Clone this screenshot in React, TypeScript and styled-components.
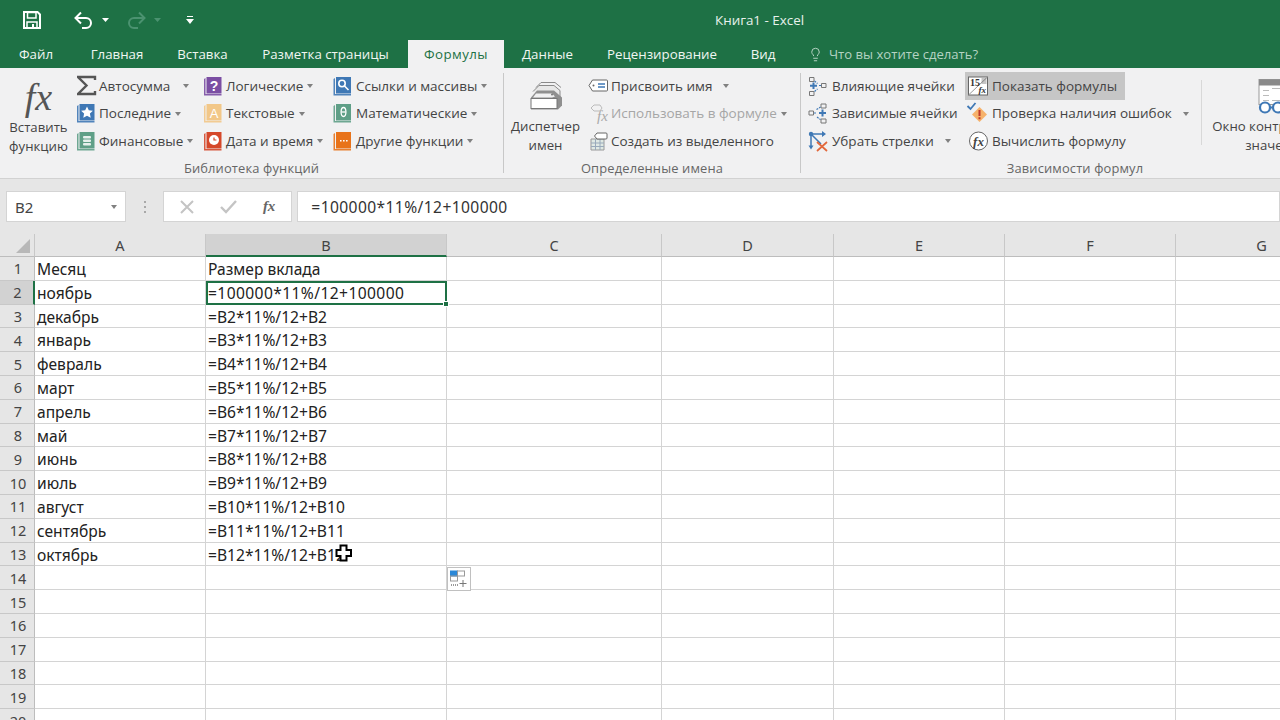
import React from "react";
import styled, { createGlobalStyle } from "styled-components";
import { Lightbulb } from "lucide-react";

const Global = createGlobalStyle`
  html, body { margin: 0; padding: 0; background: #fff; }
  #root { width: 1280px; height: 720px; overflow: hidden; }
  * { box-sizing: border-box; }
`;
const GREEN = "#1e7145";
const UI = `"Open Sans", "Noto Sans", sans-serif`;

const Page = styled.div`
  width: 1280px; height: 720px; overflow: hidden; position: relative;
  font-family: ${UI}; color: #444; display: flex; flex-direction: column;
`;
const TitleBar = styled.header`
  height: 40px; flex: none; background: ${GREEN}; display: flex; align-items: center; color: #fff; padding-left: 21px;
`;
const QatIcon = styled.svg<{ $ml: number }>`margin-left: ${(p) => p.$ml}px; flex: none; display: block;`;
const Title = styled.div`
  position: absolute; left: 715px; top: 12px; font-size: 13.4px; line-height: 17px; color: #e8f1ec; white-space: nowrap;
`;
const Tabs = styled.nav`
  height: 28px; flex: none; background: ${GREEN}; display: flex; align-items: stretch; padding-left: 18px; font-size: 13.3px;
`;
const Tab = styled.div<{ $w: number; $active?: boolean }>`
  width: ${(p) => p.$w}px; flex: none; display: flex; align-items: center; justify-content: center; white-space: nowrap;
  color: ${(p) => (p.$active ? GREEN : "#f0f6f2")}; background: ${(p) => (p.$active ? "#f1f1f2" : "transparent")};
  letter-spacing: ${(p) => (p.$active ? "0.4px" : "0")};
`;
const Tell = styled.div`
  display: flex; align-items: center; gap: 6px; color: #b5d3c3; margin-left: 33px; white-space: nowrap; font-size: 13.1px;
`;
const Ribbon = styled.section`
  height: 111px; flex: none; background: #f1f1f2; border-bottom: 1px solid #d2d2d2; display: flex; padding-top: 4px; font-size: 13.5px;
`;
const Group = styled.div<{ $w: number }>`
  width: ${(p) => p.$w}px; flex: none; display: flex; flex-direction: column;
`;
const GroupBody = styled.div`display: flex; height: 83px;`;
const GroupLabel = styled.div`
  text-align: center; font-size: 12.9px; line-height: 17px; color: #666; margin-top: 5px; letter-spacing: 0.15px; white-space: nowrap;
`;
const Sep = styled.div`width: 1px; flex: none; background: #c8c8c8; margin: 1px 0 5px;`;
const InnerSep = styled.div`width: 1px; flex: none; background: #d8d8d8; margin: 8px 5px 10px 0;`;
const BigButton = styled.div<{ $w: number; $iconH: number }>`
  width: ${(p) => p.$w}px; flex: none; display: flex; flex-direction: column; align-items: center; text-align: center;
  line-height: 19px; white-space: nowrap; padding-top: 4px; font-size: 13.2px;
  & > :first-child { height: ${(p) => p.$iconH}px; }
`;
const FxBig = styled.div`
  font-family: "Liberation Serif", serif; font-style: italic; font-size: 38px; line-height: 42px; color: #555;
`;
const Column = styled.div<{ $w: number }>`width: ${(p) => p.$w}px; flex: none; display: flex; flex-direction: column;`;
const Row = styled.div<{ $dim?: boolean; $on?: boolean; $icon: number }>`
  height: 27.5px; display: flex; align-items: center; white-space: nowrap; width: fit-content; padding-right: 8px;
  color: ${(p) => (p.$dim ? "#a6a6a6" : "#444")}; background: ${(p) => (p.$on ? "#c6c6c6" : "transparent")};
  & > svg:first-child { width: ${(p) => p.$icon}px; height: 22px; flex: none; }
`;
const Caret = styled.span<{ $gap: number }>`
  width: 0; height: 0; margin-left: ${(p) => p.$gap}px; margin-top: 1px; flex: none;
  border-left: 3.5px solid transparent; border-right: 3.5px solid transparent; border-top: 4px solid #808080;
`;
const FormulaRow = styled.div`
  height: 55px; flex: none; background: #e6e6e6; padding: 12px 0 0 6px; display: flex; gap: 0;
`;
const Box = styled.div`
  height: 31px; background: #fff; border: 1px solid #d4d4d4; display: flex; align-items: center;
`;
const NameBox = styled(Box)`
  width: 121px; padding: 0 8px; justify-content: space-between; font-family: "Noto Sans", sans-serif; font-size: 15px; color: #444;
`;
const Dots = styled.div`
  width: 37px; flex: none; display: flex; flex-direction: column; align-items: center; justify-content: center; gap: 3px; height: 31px;
  & > i { width: 2px; height: 2px; background: #a8a8a8; display: block; }
`;
const FnButtons = styled(Box)`width: 130px; justify-content: space-around; padding: 0 3px; margin-right: 5px;`;
const FxSmall = styled.span`font-family: "Liberation Serif", serif; font-style: italic; font-weight: 700; font-size: 15px; color: #666;`;
const Input = styled(Box)`
  width: 990px; padding-left: 13px; font-family: "Noto Sans", sans-serif; font-size: 15.6px; letter-spacing: 0.4px; color: #333;
`;
const Sheet = styled.main`
  display: grid; grid-template-columns: 35px 171px 241px 215px 172px 171px 171px 172px;
  grid-template-rows: 23px; grid-auto-rows: 23.8px;
  font-family: "Noto Sans", "Open Sans", sans-serif; font-size: 15.6px; color: #222; background: #fff; flex: none;
`;
const Corner = styled.div`
  background: #e6e6e6; border-right: 1px solid #c8c8c8; border-bottom: 1px solid #bdbdbd; position: relative;
  &::after { content: ""; position: absolute; right: 4px; bottom: 3px; border-style: solid; border-width: 0 0 14px 14px; border-color: transparent transparent #b8b8b8 transparent; }
`;
const ColHead = styled.div<{ $sel?: boolean }>`
  display: flex; align-items: center; justify-content: center; font-family: "Noto Sans", sans-serif; font-size: 14.5px; color: #444;
  background: ${(p) => (p.$sel ? "#d2d2d2" : "#e6e6e6")}; border-right: 1px solid #c8c8c8;
  border-bottom: ${(p) => (p.$sel ? `2px solid ${GREEN}` : "1px solid #bdbdbd")};
`;
const RowHead = styled.div<{ $sel?: boolean }>`
  display: flex; align-items: center; justify-content: center; padding-left: 2px; font-size: 14.5px; color: #444;
  background: ${(p) => (p.$sel ? "#d2d2d2" : "#e6e6e6")}; border-bottom: 1px solid #c8c8c8;
  border-right: ${(p) => (p.$sel ? `2px solid ${GREEN}` : "1px solid #bdbdbd")};
`;
const Cell = styled.div<{ $sel?: boolean }>`
  border-right: 1px solid #d4d4d4; border-bottom: 1px solid #d4d4d4; padding-left: 2px; line-height: 25px;
  white-space: nowrap; position: relative; overflow: visible;
  ${(p) => p.$sel && `outline: 2px solid ${GREEN}; outline-offset: -2px; z-index: 2; letter-spacing: 0.4px;`}
`;
const Handle = styled.i`
  position: absolute; right: -3px; bottom: -3px; width: 6px; height: 6px; background: ${GREEN}; border: 1px solid #fff; display: block;
`;
const PasteBadge = styled.div`
  position: absolute; left: 447px; top: 567px; width: 24px; height: 24px; background: #fff; border: 1px solid #c0c0c0;
  display: flex; align-items: center; justify-content: center; z-index: 3;
`;
const CursorWrap = styled.svg`position: absolute; left: 335px; top: 544px; z-index: 3;`;
const WatchIcon = styled.svg`margin-left: 10px;`;

type G = "star" | "stack" | "q" | "a" | "clock" | "mag" | "theta" | "dots";
const Book = ({ color, g }: { color: string; g: G }) => (
  <svg viewBox="2.5 0 22 22">
    <path d="M2.5 4 V20.5 H20 V19 H4 V3 Z" fill={color} opacity=".9" />
    <rect x="5" y="2" width="15" height="16.5" fill={color} />
    {g === "star" && <path d="M12.5 4.5l1.8 3.8 4.1.5-3 2.8.8 4.1-3.7-2-3.7 2 .8-4.1-3-2.8 4.1-.5z" fill="#fff" />}
    {g === "stack" && <g fill="#fff" opacity=".85"><rect x="8.5" y="6" width="8" height="2.4" rx="1" /><rect x="8.5" y="9.5" width="8" height="2.4" rx="1" /><rect x="8.5" y="13" width="8" height="2.4" rx="1" /></g>}
    {g === "q" && <text x="12.5" y="15.5" textAnchor="middle" fontSize="14" fontWeight="700" fontFamily="Liberation Sans, sans-serif" fill="#fff">?</text>}
    {g === "a" && <text x="12.5" y="15.5" textAnchor="middle" fontSize="13" fontFamily="Liberation Sans, sans-serif" fill="#fff">A</text>}
    {g === "clock" && <g><circle cx="12.5" cy="10" r="5" fill="#fff" /><path d="M12.5 7.5V10h2.4" stroke={color} strokeWidth="1.2" fill="none" /></g>}
    {g === "mag" && <g fill="none" stroke="#fff" strokeWidth="1.6"><circle cx="11" cy="8.5" r="3.2" /><path d="M13.5 11l4 4" /></g>}
    {g === "theta" && <g fill="none" stroke="#fff" strokeWidth="1.3"><ellipse cx="12.5" cy="10" rx="2.4" ry="4.5" /><path d="M10.5 10h4" /></g>}
    {g === "dots" && <path d="M9 10h1.6v1.6H9zM12 10h1.6v1.6H12zM15 10h1.6v1.6H15z" fill="#fff" />}
  </svg>
);
const Sigma = () => (
  <svg viewBox="2 0 22 22"><path d="M20 6V3H3l8.500 8.500L3 20h17v-3" transform="translate(0 -1)" fill="none" stroke="#555" strokeWidth="2.4" /></svg>
);
const Trace = ({ kind }: { kind: "prec" | "dep" | "rem" }) => (
  <svg viewBox="0 0 25 22" fill="none" preserveAspectRatio="xMaxYMid">
    {kind === "prec" && <g>
      <path d="M2.500 2.500h4.500V6.500H2.500zM14.500 8.500h4.500v4h-4.500zM2.500 16.500h4.500v4H2.500z" stroke="#777" />
      <path d="M7.500 6l3 2.500M14 10.500h-2.500M7.500 16.500l3-2.500" stroke="#3f78b5" strokeWidth="1.200" strokeDasharray="2 1" />
      <path d="M6.500 7.500v6.500M3 10.700h7" stroke="#3f78b5" strokeWidth="2" />
    </g>}
    {kind === "dep" && <g>
      <path d="M2 9h4.500v4H2zM14 2h5v4h-5zM14 17h5v4h-5z" stroke="#777" />
      <path d="M7 11h2.500M9.500 7.500l4-2.500M10 15l3.500 2.500" stroke="#3f78b5" strokeWidth="1.200" strokeDasharray="2 1" />
      <path d="M15.500 7.500v7M12 11h7" stroke="#3f78b5" strokeWidth="2" />
    </g>}
    {kind === "rem" && <g>
      <path d="M4 4v13M4 4l13 0M4 4l10 10" stroke="#3f78b5" strokeWidth="1.500" />
      <path d="M1.500 15.500l2.500 4 2.500-4zM15 1l4 3-4 3z" fill="#3f78b5" />
      <circle cx="4" cy="4" r="2.200" fill="#3f78b5" />
      <path d="M10 12l10 9M20 12l-10 9" stroke="#e2683c" strokeWidth="1.700" />
    </g>}
  </svg>
);
const NameTag = () => (
  <svg viewBox="0 0 22 22" fill="none"><path d="M4.5 5h14a1 1 0 0 1 1 1v9a1 1 0 0 1-1 1h-14L1 10.5z" fill="#fff" stroke="#666" /><path d="M10 9h7M10 12h7" stroke="#3f78b5" strokeWidth="1.4" /><circle cx="5.5" cy="10.5" r="1" fill="#666" /></svg>
);
const FxTag = () => (
  <svg viewBox="0 0 22 22" fill="none"><path d="M3 6l3-3h6l2 3-2 3H6z" stroke="#bbb" /><text x="9" y="19" fontSize="15" fontStyle="italic" fontFamily="Liberation Serif, serif" fill="#aaa">fx</text></svg>
);
const FromSel = () => (
  <svg viewBox="0 0 22 22" fill="none"><path d="M3 9h13v11H3z" fill="#dfe9e4" stroke="#999" /><path d="M3 13h13M3 16.500h13M7.500 9v11M12 9v11" stroke="#9ab" /><path d="M9 3h9a1 1 0 0 1 1 1v4a1 1 0 0 1-1 1H9L6.500 6z" fill="#fff" stroke="#666" /></svg>
);
const ShowF = () => (
  <svg viewBox="0 0 22 22"><rect x="1" y="2" width="19" height="18" fill="#fff" stroke="#666" /><path d="M1 20L20 2" stroke="#999" /><text x="2.500" y="11" fontSize="10" fontWeight="700" fontFamily="Liberation Serif, serif" fill="#333">15</text><text x="11" y="18" fontSize="9" fontStyle="italic" fontWeight="700" fontFamily="Liberation Serif, serif" fill="#333">fx</text><path d="M14 3h5v6h-5z" fill="#555" opacity=".35" /></svg>
);
const ErrCheck = () => (
  <svg viewBox="0 0 24 22" fill="none"><path d="M1 4l3 3 5-6" stroke="#3f78b5" strokeWidth="1.800" /><path d="M13 5l7.500 7.500L13 20l-7.500-7.500z" fill="#f6b26b" /><rect x="12" y="8" width="2" height="6" fill="#c0392b" /><rect x="12" y="15.200" width="2" height="2" fill="#c0392b" /></svg>
);
const EvalF = () => (
  <svg viewBox="0 0 22 22" fill="none"><circle cx="11" cy="11" r="9" fill="#fff" stroke="#666" /><text x="11" y="15.500" textAnchor="middle" fontSize="13" fontStyle="italic" fontWeight="700" fontFamily="Liberation Serif, serif" fill="#444">fx</text></svg>
);
const NameManager = () => (
  <svg width="36" height="32" viewBox="0 0 36 32" fill="none">
    <path d="M8 7l5-5h14l6 5" stroke="#8a8a8a" />
    <path d="M5 11l6-6h15l6 5v10" fill="#e8e8e8" stroke="#8a8a8a" />
    <path d="M3 17l6-7h17l8 7v8l-4 4H3z" fill="#8f8f8f" />
    <path d="M8 13h16l3 3-3 1H5z" fill="#f1f1f2" />
    <circle cx="24" cy="14" r="1" fill="#777" />
    <rect x="3" y="18" width="26" height="10" fill="#fff" stroke="#777" />
  </svg>
);
const Watch = () => (
  <WatchIcon width="46" height="36" viewBox="0 0 46 36" fill="none">
    <rect x="1" y="1" width="44" height="25" fill="#fff" stroke="#999" />
    <rect x="1" y="1" width="44" height="6" fill="#8a8a8a" />
    <path d="M5 12h6M5 17h6M5 22h6M14 10h30M14 22h30" stroke="#bbb" />
    <circle cx="7" cy="29" r="5" fill="#fff" stroke="#3f78b5" strokeWidth="2.200" />
    <circle cx="20" cy="29" r="5" fill="#fff" stroke="#3f78b5" strokeWidth="2.200" />
    <path d="M12 29h3" stroke="#3f78b5" strokeWidth="2" />
  </WatchIcon>
);

type Item = { icon: React.ReactNode; w: number; text: string; gap?: number; dim?: boolean; on?: boolean };
const Col = ({ w, items }: { w: number; items: Item[] }) => (
  <Column $w={w}>
    {items.map((i) => (
      <Row key={i.text} $icon={i.w} $dim={i.dim} $on={i.on}>
        {i.icon}
        <span>{i.text}</span>
        {i.gap !== undefined && <Caret $gap={i.gap} />}
      </Row>
    ))}
  </Column>
);

const rows: [string, string][] = [
  ["Месяц", "Размер вклада"], ["ноябрь", "=100000*11%/12+100000"], ["декабрь", "=B2*11%/12+B2"],
  ["январь", "=B3*11%/12+B3"], ["февраль", "=B4*11%/12+B4"], ["март", "=B5*11%/12+B5"],
  ["апрель", "=B6*11%/12+B6"], ["май", "=B7*11%/12+B7"], ["июнь", "=B8*11%/12+B8"],
  ["июль", "=B9*11%/12+B9"], ["август", "=B10*11%/12+B10"], ["сентябрь", "=B11*11%/12+B11"],
  ["октябрь", "=B12*11%/12+B12"],
];

export default function App() {
  const allRows = Array.from({ length: 20 }, (_, i) => i);
  return (
    <Page>
      <Global />
      <TitleBar>
        <QatIcon $ml={2} width="18" height="18" viewBox="0 0 18 18" fill="none">
          <path d="M1 1h13.500L17 3.500V17H1z" stroke="#fff" strokeWidth="2" />
          <path d="M4.500 1.500h8.500V7H4.500z" stroke="#fff" strokeWidth="1.500" />
          <path d="M4 17v-6h10v6" stroke="#fff" strokeWidth="1.500" />
          <path d="M9 13h2v4H9z" fill="#fff" />
        </QatIcon>
        <QatIcon $ml={33} width="20" height="18" viewBox="0 0 20 18" fill="none">
          <path d="M2 7h10a5 5 0 0 1 0 10H8" stroke="#fff" strokeWidth="2" />
          <path d="M7 1.500L1.500 7 7 12.500" stroke="#fff" strokeWidth="2" />
        </QatIcon>
        <QatIcon $ml={8} width="7" height="5" viewBox="0 0 7 5"><path d="M0 0h7L3.500 4z" fill="#fff" /></QatIcon>
        <QatIcon $ml={17} width="20" height="18" viewBox="0 0 20 18" fill="none">
          <path d="M18 7H8a5 5 0 0 0 0 10h4" stroke="#4b9270" strokeWidth="2" />
          <path d="M13 1.500L18.500 7 13 12.500" stroke="#4b9270" strokeWidth="2" />
        </QatIcon>
        <QatIcon $ml={8} width="7" height="5" viewBox="0 0 7 5"><path d="M0 0h7L3.500 4z" fill="#4b9270" /></QatIcon>
        <QatIcon $ml={25} width="8" height="8" viewBox="0 0 8 8"><path d="M1 0h6v1H1zM0 3h8L4 8z" fill="#fff" /></QatIcon>
        <Title>Книга1 - Excel</Title>
      </TitleBar>
      <Tabs>
        <Tab $w={36}>Файл</Tab>
        <Tab $w={37} />
        <Tab $w={52}>Главная</Tab>
        <Tab $w={35} />
        <Tab $w={49}>Вставка</Tab>
        <Tab $w={35} />
        <Tab $w={127}>Разметка страницы</Tab>
        <Tab $w={19} />
        <Tab $w={96} $active>Формулы</Tab>
        <Tab $w={18} />
        <Tab $w={51}>Данные</Tab>
        <Tab $w={35} />
        <Tab $w={108}>Рецензирование</Tab>
        <Tab $w={35} />
        <Tab $w={24}>Вид</Tab>
        <Tell>
          <Lightbulb size={15} strokeWidth={1.6} />
          <span>Что вы хотите сделать?</span>
        </Tell>
      </Tabs>
      <Ribbon>
        <Group $w={503}>
          <GroupBody>
            <BigButton $w={77} $iconH={44}>
              <FxBig>fx</FxBig>
              <span>Вставить</span>
              <span>функцию</span>
            </BigButton>
            <Col w={127} items={[
              { icon: <Sigma />, w: 22, text: "Автосумма", gap: 13 },
              { icon: <Book color="#3f78b5" g="star" />, w: 22, text: "Последние", gap: 4 },
              { icon: <Book color="#5f9f87" g="stack" />, w: 22, text: "Финансовые", gap: 4 },
            ]} />
            <Col w={129} items={[
              { icon: <Book color="#7b4ea3" g="q" />, w: 22, text: "Логические", gap: 4 },
              { icon: <Book color="#f2c788" g="a" />, w: 22, text: "Текстовые", gap: 4 },
              { icon: <Book color="#d5482a" g="clock" />, w: 22, text: "Дата и время", gap: 4 },
            ]} />
            <Col w={170} items={[
              { icon: <Book color="#3f78b5" g="mag" />, w: 23, text: "Ссылки и массивы", gap: 4 },
              { icon: <Book color="#5f9f87" g="theta" />, w: 23, text: "Математические", gap: 4 },
              { icon: <Book color="#e8731a" g="dots" />, w: 23, text: "Другие функции", gap: 4 },
            ]} />
          </GroupBody>
          <GroupLabel>Библиотека функций</GroupLabel>
        </Group>
        <Sep />
        <Group $w={296}>
          <GroupBody>
            <BigButton $w={83} $iconH={44}>
              <NameManager />
              <span>Диспетчер</span>
              <span>имен</span>
            </BigButton>
            <Col w={210} items={[
              { icon: <NameTag />, w: 24, text: "Присвоить имя", gap: 11 },
              { icon: <FxTag />, w: 24, text: "Использовать в формуле", gap: 4, dim: true },
              { icon: <FromSel />, w: 24, text: "Создать из выделенного" },
            ]} />
          </GroupBody>
          <GroupLabel>Определенные имена</GroupLabel>
        </Group>
        <Sep />
        <Group $w={548}>
          <GroupBody>
            <Col w={164} items={[
              { icon: <Trace kind="prec" />, w: 31, text: "Влияющие ячейки" },
              { icon: <Trace kind="dep" />, w: 31, text: "Зависимые ячейки" },
              { icon: <Trace kind="rem" />, w: 31, text: "Убрать стрелки", gap: 11 },
            ]} />
            <Col w={236} items={[
              { icon: <ShowF />, w: 27, text: "Показать формулы", on: true },
              { icon: <ErrCheck />, w: 27, text: "Проверка наличия ошибок", gap: 11 },
              { icon: <EvalF />, w: 27, text: "Вычислить формулу" },
            ]} />
            <InnerSep />
            <BigButton $w={138} $iconH={44}>
              <Watch />
              <span>Окно контрольного</span>
              <span>значения</span>
            </BigButton>
          </GroupBody>
          <GroupLabel>Зависимости формул</GroupLabel>
        </Group>
      </Ribbon>
      <FormulaRow>
        <NameBox>
          <span>B2</span>
          <Caret $gap={0} />
        </NameBox>
        <Dots><i /><i /><i /></Dots>
        <FnButtons>
          <svg width="14" height="14" viewBox="0 0 14 14"><path d="M1 1l12 12M13 1L1 13" stroke="#c4c4c4" strokeWidth="2" /></svg>
          <svg width="17" height="14" viewBox="0 0 17 14"><path d="M1 7l5 5 10-11" fill="none" stroke="#c4c4c4" strokeWidth="2.400" /></svg>
          <FxSmall>fx</FxSmall>
        </FnButtons>
        <Input>=100000*11%/12+100000</Input>
      </FormulaRow>
      <Sheet>
        <Corner />
        {["A", "B", "C", "D", "E", "F", "G"].map((c) => (
          <ColHead key={c} $sel={c === "B"}>{c}</ColHead>
        ))}
        {allRows.map((r) => (
          <React.Fragment key={r}>
            <RowHead $sel={r === 1}>{r + 1}</RowHead>
            <Cell>{rows[r]?.[0]}</Cell>
            <Cell $sel={r === 1}>
              {rows[r]?.[1]}
              {r === 1 && <Handle />}
            </Cell>
            {[2, 3, 4, 5, 6].map((c) => <Cell key={c} />)}
          </React.Fragment>
        ))}
      </Sheet>
      <CursorWrap width="18" height="18" viewBox="0 0 18 18">
        <path d="M5.500 1.500h6v4.500h4.500v6h-4.500v4.500h-6v-4.500H1.500V6h4z" fill="#fff" stroke="#000" strokeWidth="2" />
      </CursorWrap>
      <PasteBadge>
        <svg width="18" height="18" viewBox="0 0 18 18" fill="none">
          <rect x="0.500" y="1" width="7" height="5" fill="#2b88d8" stroke="#2b88d8" />
          <rect x="7.500" y="1" width="7" height="5" stroke="#999" />
          <rect x="0.500" y="6" width="7" height="5" stroke="#999" />
          <path d="M1 15h7" stroke="#999" strokeDasharray="1 1" strokeWidth="2" />
          <path d="M13 10v7M9.500 13.500h7" stroke="#777" />
        </svg>
      </PasteBadge>
    </Page>
  );
}
